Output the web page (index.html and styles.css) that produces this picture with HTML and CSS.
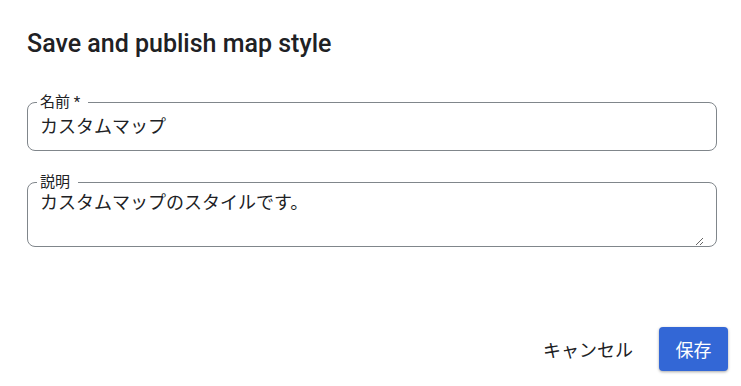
FILE: index.html
```html
<!DOCTYPE html>
<html lang="ja">
  <head>
    <meta charset="UTF-8" />
    <title>Save and publish map style</title>
    <link rel="stylesheet" href="styles.css">
  </head>
  <body>
    <div class="dialog">
      <h2 class="title">Save and publish map style</h2>

      <fieldset class="field">
        <legend>名前 *</legend>
        <input type="text" class="input" value="カスタムマップ" />
      </fieldset>

      <fieldset class="field area">
        <legend>説明</legend>
        <textarea class="input" rows="2">カスタムマップのスタイルです。</textarea>
      </fieldset>

      <div class="actions">
        <button type="button" class="btn text">キャンセル</button>
        <button type="button" class="btn primary">保存</button>
      </div>
    </div>
  </body>
</html>
```

FILE: styles.css
```css
* {
  box-sizing: border-box;
}

body {
  margin: 0;
  background: #fff;
  font-family: Roboto, "Noto Sans CJK JP", sans-serif;
  color: #202124;
}

.dialog {
  width: 741px;
  height: 386px;
  padding: 30px 13px 15px 27px;
  display: flex;
  flex-direction: column;
}

.title {
  margin: 0 0 36px;
  font-size: 25px;
  font-weight: 500;
  line-height: 28px;
  color: #202124;
}

/* 테두리 박스 + 레전드 */
.field {
  margin: 0 11px 0 0;
  padding: 0 12px 9px;
  border: 1px solid #80868b;
  border-radius: 8px;
  min-width: 0;
}

.field legend {
  margin-left: -3px;
  padding: 0 8px 0 3px;
  font-size: 15px;
  line-height: 16px;
  color: #202124;
}

.field + .field {
  margin-top: 23px;
}

.input {
  display: block;
  width: 100%;
  margin-top: 3px;
  border: 0;
  outline: none;
  padding: 0;
  font-family: inherit;
  font-size: 18px;
  line-height: 28px;
  color: #202124;
  background: transparent;
}

.area {
  padding-bottom: 0;
}

.area textarea {
  margin-top: 1px;
  height: 55px;
  resize: vertical;
  line-height: 24px;
}

.actions {
  margin-top: auto;
  display: flex;
  justify-content: flex-end;
  align-items: center;
  gap: 16px;
}

.btn {
  border: 0;
  font-family: inherit;
  font-size: 18px;
  height: 44px;
  border-radius: 4px;
  cursor: pointer;
}

.text {
  background: none;
  color: #202124;
  padding: 0 10px;
}

.primary {
  width: 69px;
  background: #3367d6;
  color: #fff;
  box-shadow: 0 1px 3px rgba(0, 0, 0, 0.35);
}
```
